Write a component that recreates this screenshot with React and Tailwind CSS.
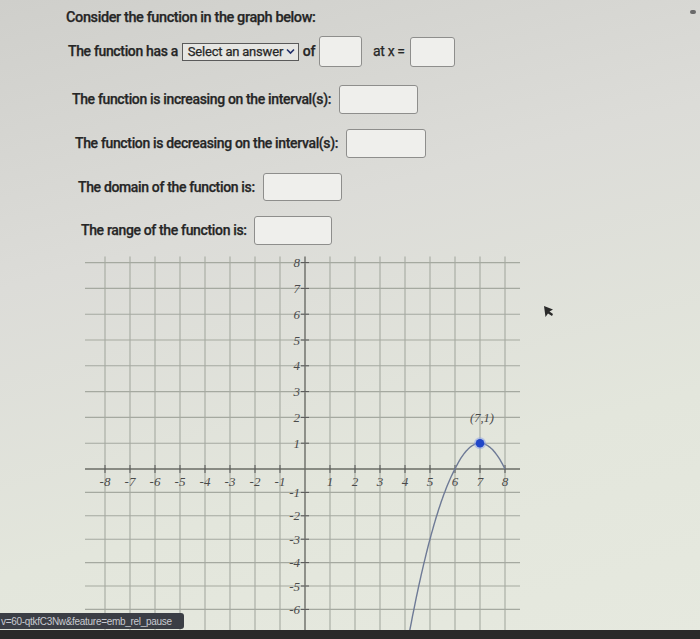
import React from "react";

const FONT = { fontFamily: 'Roboto,"Liberation Sans",sans-serif' };

function Box({ w, h = 29 }) {
  return <div className="border border-[#8e8e8c] rounded-[3px] bg-[#efefec]" style={{ width: w, height: h }} />;
}

function Graph() {
  const ox = 223, oy = 218, u = 25;
  const W = 438, H = 389;
  const Y = (j) => (j >= 0 ? oy - j * 25.8 : oy - j * 23.4);
  const v = [];
  for (let i = -8; i <= 8; i++) v.push(i);
  const hz = [];
  for (let j = -7; j <= 8; j++) hz.push(j);
  const pts = [];
  for (let x = 4.0; x <= 8.0001; x += 0.05) {
    const y = 1 - (x - 7) * (x - 7);
    pts.push(`${(ox + x * u).toFixed(1)},${Y(y).toFixed(1)}`);
  }
  const lab = { fontFamily: '"Liberation Serif",serif' };
  return (
    <svg width={W} height={H} viewBox={`0 0 ${W} ${H}`} className="block">
      {v.map((i) => (
        <line key={"v" + i} x1={ox + i * u} x2={ox + i * u} y1={Y(8) - 6} y2={H}
          stroke={i === 0 ? "#6a6c66" : "#a5a9a0"} strokeWidth={i === 0 ? 1.4 : 1.1} />
      ))}
      {hz.map((j) => (
        <line key={"h" + j} x1={ox - 8.8 * u} x2={ox + 8.6 * u} y1={Y(j)} y2={Y(j)}
          stroke={j === 0 ? "#6a6c66" : "#a5a9a0"} strokeWidth={j === 0 ? 1.4 : 1.1} />
      ))}
      {hz.filter((j) => j !== 0 && j >= -6).map((j) => (
        <g key={"yl" + j}>
          <line x1={ox - 4} x2={ox + 4} y1={Y(j)} y2={Y(j)} stroke="#555" strokeWidth="1" />
          <text x={ox - 5} y={Y(j) + 4.5} textAnchor="end" fontSize="13" fontStyle="italic"
            fill="#4a4a4a" style={lab}>{j}</text>
        </g>
      ))}
      {v.filter((i) => i !== 0).map((i) => (
        <g key={"xl" + i}>
          <line x1={ox + i * u} x2={ox + i * u} y1={oy - 4} y2={oy + 4} stroke="#555" strokeWidth="1" />
          <text x={ox + i * u} y={oy + 17} textAnchor="middle" fontSize="13" fontStyle="italic"
            fill="#4a4a4a" style={lab}>{i}</text>
        </g>
      ))}
      <polyline points={pts.join(" ")} fill="none" stroke="#6e7a96" strokeWidth="1.4" />
      <circle cx={ox + 7 * u} cy={Y(1)} r="6" fill="#8aa0e8" opacity="0.5" />
      <circle cx={ox + 7 * u} cy={Y(1)} r="4.3" fill="#2046c8" />
      <text x={ox + 7 * u + 2} y={Y(1) - 21} textAnchor="middle" fontSize="12.5" fontStyle="italic"
        fill="#4a4a4a" style={lab}>(7,1)</text>
    </svg>
  );
}

export default function App() {
  return (
    <div
      className="relative w-[700px] h-[639px] overflow-hidden bg-[linear-gradient(165deg,#cfcfcb_0%,#dcdcd8_35%,#e3e6dc_70%,#e6e9df_100%)] text-[#262626] [-webkit-text-stroke:0.25px_#262626]"
      style={FONT}
    >
      <div className="pt-[8px] pl-[66px] h-[27px] text-[14.5px] leading-[19px] tracking-[-0.4px] font-medium whitespace-nowrap">
        Consider the function in the graph below:
      </div>

      <div className="mt-[9px] ml-[68px] h-[31px] flex items-center text-[14px] tracking-[-0.35px] font-medium whitespace-nowrap">
        <span>The function has a</span>
        <div className="ml-[4px] w-[117px] h-[18px] border border-[#5a5a5a] bg-[#e6e6e3] flex items-center pl-[5px] text-[13px] tracking-[-0.2px] font-normal">
          <span>Select an answer</span>
          <svg width="9" height="7" viewBox="0 0 9 7" className="ml-[3px]">
            <path d="M1 1.5 L4.5 5 L8 1.5" fill="none" stroke="#23306a" strokeWidth="1.6" />
          </svg>
        </div>
        <span className="ml-[4px]">of</span>
        <div className="ml-[4px]"><Box w={43} h={31} /></div>
        <span className="ml-[11px] font-normal">at x =</span>
        <div className="ml-[5px]"><Box w={45} h={30} /></div>
      </div>

      <div className="mt-[18px] ml-[72px] h-[29px] flex items-center text-[14px] tracking-[-0.35px] font-medium whitespace-nowrap">
        <span>The function is increasing on the interval(s):</span>
        <div className="ml-[8px]"><Box w={79} /></div>
      </div>

      <div className="mt-[15px] ml-[75px] h-[29px] flex items-center text-[14px] tracking-[-0.35px] font-medium whitespace-nowrap">
        <span>The function is decreasing on the interval(s):</span>
        <div className="ml-[8px]"><Box w={80} /></div>
      </div>

      <div className="mt-[15px] ml-[78px] h-[28px] flex items-center text-[14px] tracking-[-0.35px] font-medium whitespace-nowrap">
        <span>The domain of the function is:</span>
        <div className="ml-[8px]"><Box w={79} h={28} /></div>
      </div>

      <div className="mt-[15px] ml-[81px] h-[29px] flex items-center text-[14px] tracking-[-0.35px] font-medium whitespace-nowrap">
        <span>The range of the function is:</span>
        <div className="ml-[7px]"><Box w={78} /></div>
      </div>

      <div className="mt-[6px] ml-[82px]">
        <Graph />
      </div>

      <div className="absolute left-0 top-[613px] h-[16px] w-[184px] bg-[#3b3e45] rounded-r-[3px] flex items-center pl-[1px] text-[10px] text-[#c8cad0] tracking-[-0.3px] whitespace-nowrap [-webkit-text-stroke:0px]"
        style={{ fontFamily: '"Liberation Sans",sans-serif' }}>
        v=60-qtkfC3Nw&amp;feature=emb_rel_pause
      </div>
      <div className="absolute left-0 bottom-0 w-full h-[9px] bg-[#2b2a2a]" />
      <div className="absolute left-[690px] top-[10px] w-[6px] h-[4px] rounded-full bg-[#6a6a6a]" />
      <svg className="absolute left-[543px] top-[305px]" width="12" height="14" viewBox="0 0 12 14">
        <path d="M1 1 L2.5 12 L5 8.5 L9 11 L10 9 L6.5 6.5 L10 4.5 Z" fill="#2a2a2a" />
      </svg>
    </div>
  );
}
